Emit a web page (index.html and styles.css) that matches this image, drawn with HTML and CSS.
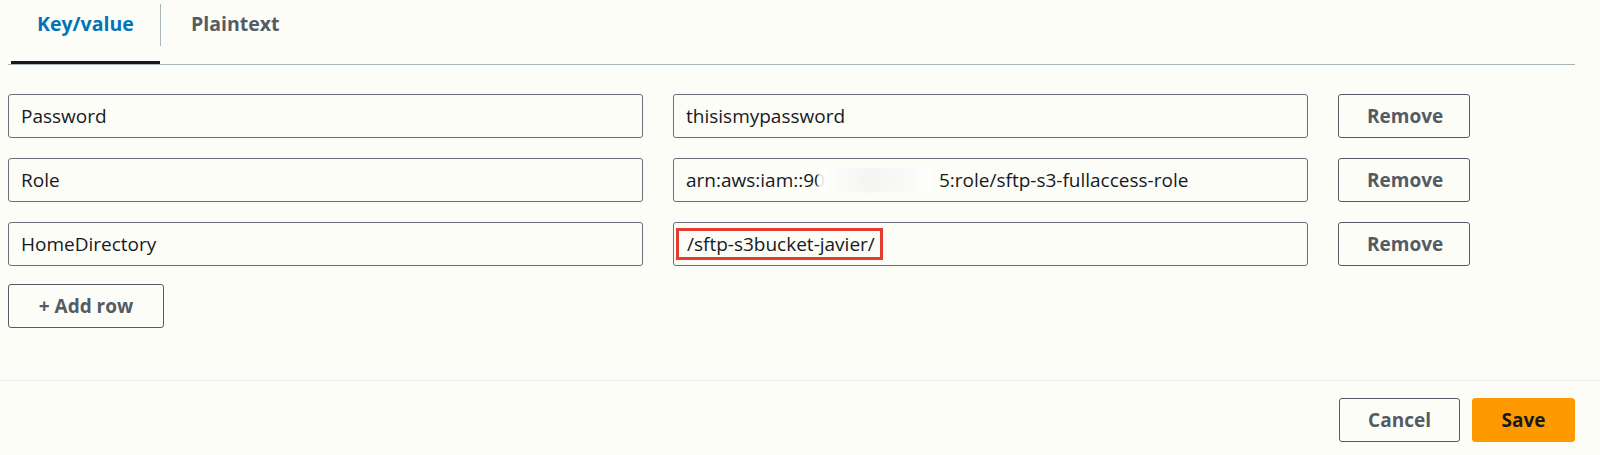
FILE: index.html
```html
<!DOCTYPE html>
<html lang="en">
<head>
<meta charset="utf-8">
<title>Secret value</title>
<link rel="stylesheet" href="styles.css">
</head>
<body>
<div class="page">
  <div class="content">
    <div class="tabs">
      <div class="tab active">Key/value</div>
      <div class="tab-sep"></div>
      <div class="tab">Plaintext</div>
    </div>
    <div class="rows">
      <div class="row">
        <div class="field">Password</div>
        <div class="field">thisismypassword</div>
        <button class="btn">Remove</button>
      </div>
      <div class="row">
        <div class="field">Role</div>
        <div class="field">arn:aws:iam::90<span class="redact"></span>5:role/sftp-s3-fullaccess-role</div>
        <button class="btn">Remove</button>
      </div>
      <div class="row">
        <div class="field">HomeDirectory</div>
        <div class="field"><span class="highlight">/sftp-s3bucket-javier/</span></div>
        <button class="btn">Remove</button>
      </div>
    </div>
    <div class="add">
      <button class="btn">+ Add row</button>
    </div>
  </div>
  <div class="footer">
    <button class="btn">Cancel</button>
    <button class="btn primary">Save</button>
  </div>
</div>
</body>
</html>
```
FILE: styles.css
```css
html, body {
  margin: 0;
  padding: 0;
  background: #fdfdf8;
}
body {
  font-family: "Open Sans", "Liberation Sans", sans-serif;
  color: #16191f;
  width: 1600px;
  height: 455px;
  overflow: hidden;
}
.content {
  padding: 0 25px 0 8px;
}
.tabs {
  display: flex;
  align-items: flex-start;
  border-bottom: 1px solid #aab7b8;
  height: 64px;
}
.tab {
  box-sizing: border-box;
  height: 64px;
  padding: 11px 28px 0 30px;
  font-size: 19.5px;
  font-weight: 700;
  line-height: 26px;
  color: #545b64;
}
.tab.active {
  margin-left: 3px;
  padding-left: 26px;
  padding-right: 26px;
  color: #0073bb;
  border-bottom: 3px solid #16191f;
  width: 149px;
}
.tab-sep {
  width: 1px;
  height: 42px;
  margin-top: 4px;
  background: #aab7b8;
}
.rows {
  margin-top: 29px;
  display: flex;
  flex-direction: column;
  gap: 20px;
}
.row {
  display: grid;
  grid-template-columns: 635px 635px 132px;
  column-gap: 30px;
}
.field {
  box-sizing: border-box;
  height: 44px;
  border: 1px solid #687078;
  border-radius: 3px;
  padding: 0 12px;
  font-size: 19px;
  line-height: 42px;
  color: #16191f;
  white-space: nowrap;
  overflow: hidden;
}
.redact {
  display: inline-block;
  vertical-align: middle;
  width: 114px;
  height: 24px;
  margin-left: -7px;
  margin-right: 7px;
  margin-top: -3px;
  background: linear-gradient(to right, rgba(255,255,255,0.85), #fbfbfa 15%, #f4f4f2 45%, #f9f9f7 75%, rgba(255,255,255,0.7));
  filter: blur(1px);
}
.highlight {
  display: inline-block;
  margin-left: -10px;
  padding: 0 5px 0 8px;
  line-height: 26px;
  border: 3px solid #e53b30;
  vertical-align: middle;
  margin-top: -3px;
}
.btn {
  box-sizing: border-box;
  height: 44px;
  border: 1px solid #545b64;
  border-radius: 3px;
  background: transparent;
  padding: 0 28px;
  font-family: "Open Sans", "Liberation Sans", sans-serif;
  font-size: 19px;
  font-weight: 700;
  color: #545b64;
  cursor: pointer;
}
.add {
  margin-top: 18px;
}
.add .btn {
  width: 156px;
  padding: 0;
}
.footer {
  margin-top: 52px;
  border-top: 1px solid #eaeded;
  padding: 17px 25px 0 0;
  display: flex;
  justify-content: flex-end;
  gap: 12px;
}
.footer .btn {
  width: 121px;
  padding: 0;
}
.footer .btn.primary {
  width: 103px;
  background: #ff9900;
  border-color: #ff9900;
  color: #16191f;
}
```
